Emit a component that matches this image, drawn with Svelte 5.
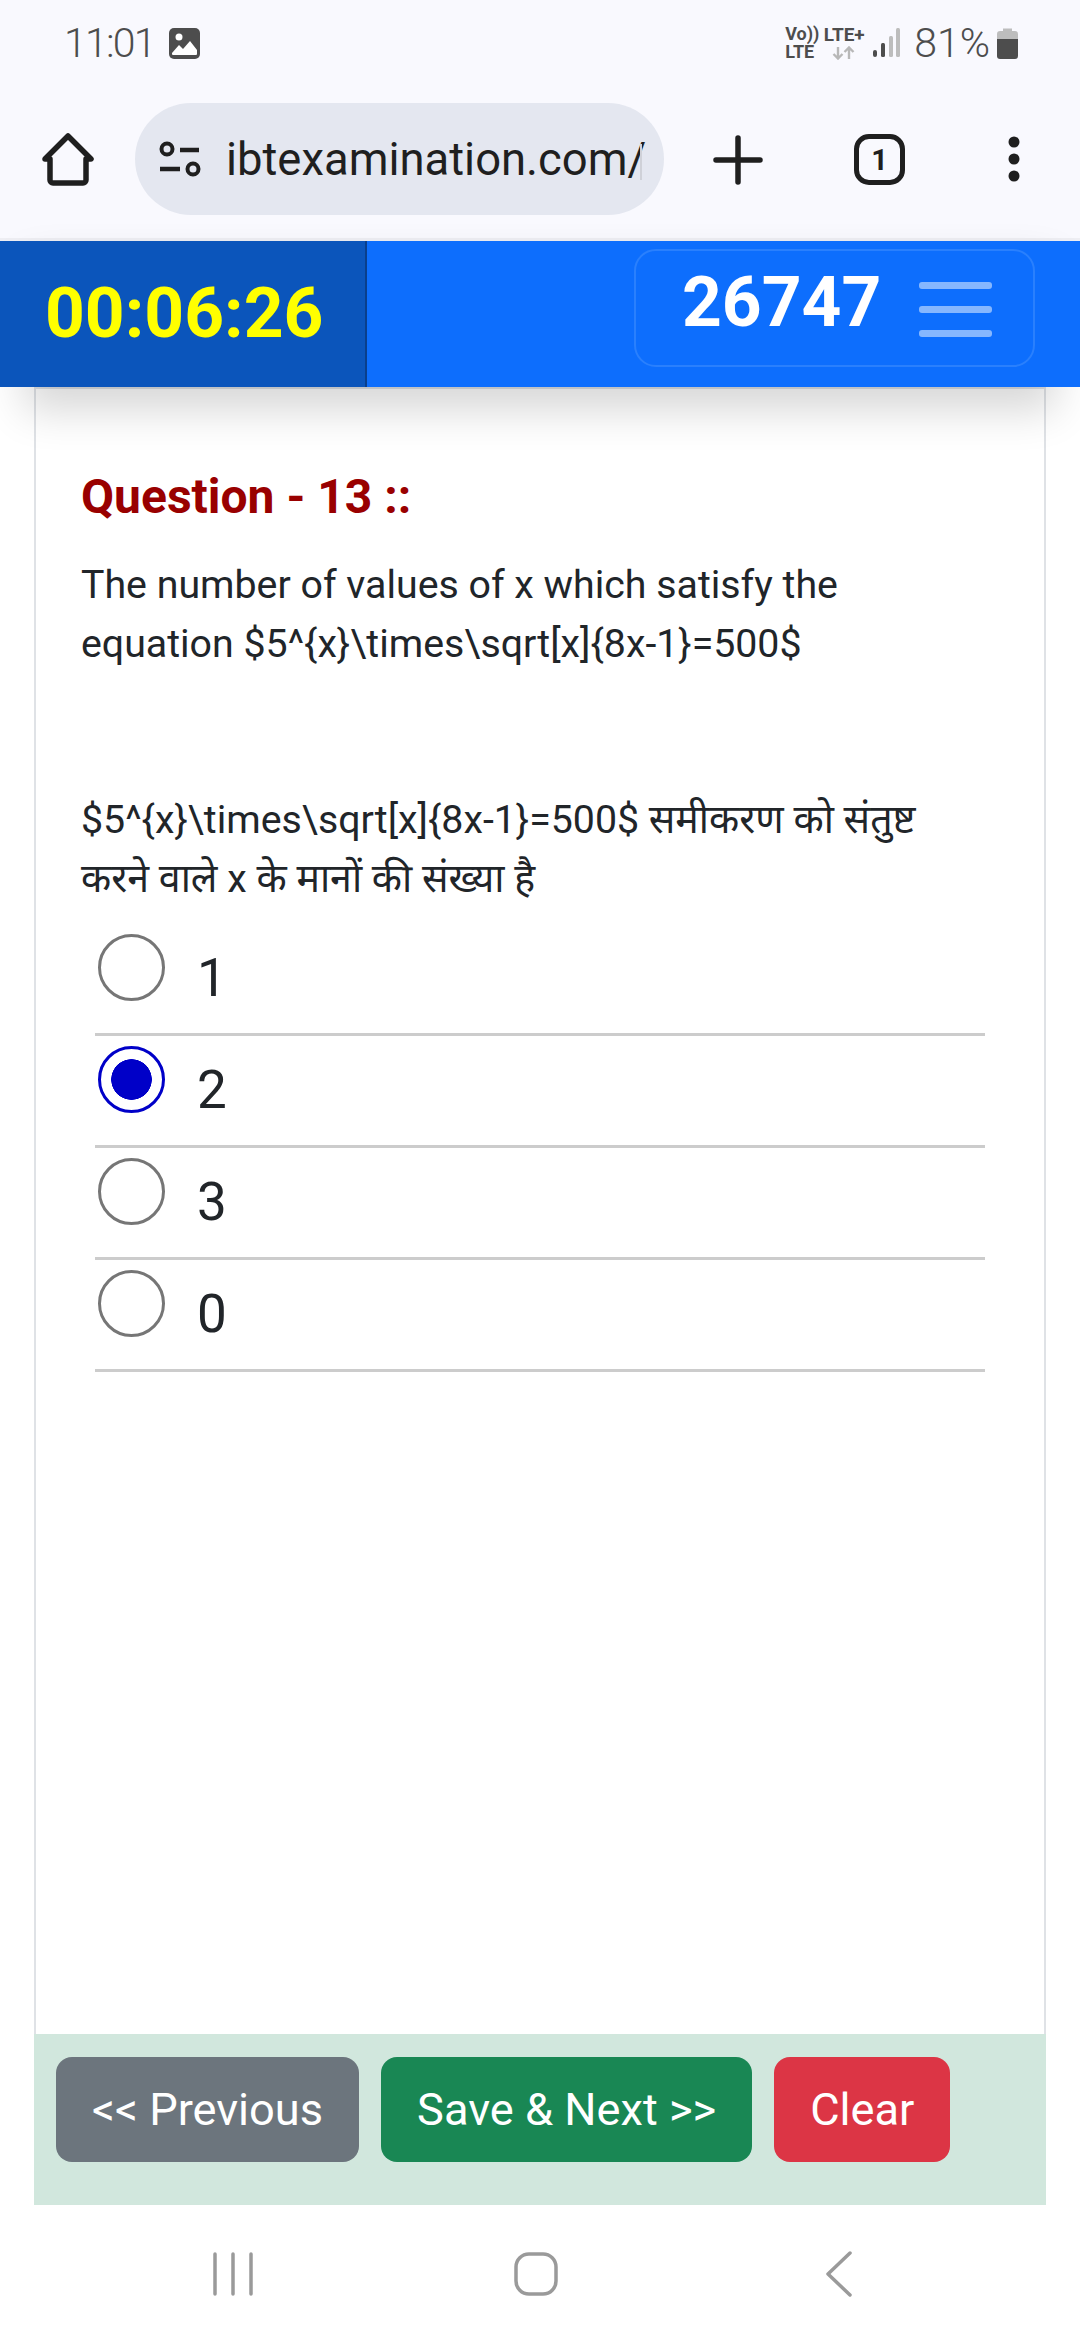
<script>
  const options = [
    { label: '1', selected: false },
    { label: '2', selected: true },
    { label: '3', selected: false },
    { label: '0', selected: false }
  ];
</script>

<div class="screen">
  <header class="status">
    <span class="time">11:01</span>
    <svg class="pic" viewBox="0 0 31 31" aria-hidden="true">
      <rect width="31" height="31" rx="5" fill="#4d4d4d" />
      <circle cx="10" cy="9" r="3.5" fill="#fff" />
      <path d="M3 25 L10 17 L14 21 L21 13 L28 22 V26 a1 1 0 0 1-1 1 H4 a1 1 0 0 1-1-1 Z" fill="#fff" />
    </svg>
    <div class="indicators">
      <div class="volte"><span>Vo))</span><span>LTE</span></div>
      <div class="lte">
        <span>LTE+</span>
        <svg class="arrows" viewBox="0 0 24 14" aria-hidden="true">
          <path d="M6 1 V12 M1.5 8 L6 12.5 L10.5 8 M17 13 V2 M12.5 6 L17 1.5 L21.5 6" fill="none" stroke="#b8b8b8" stroke-width="2.4" />
        </svg>
      </div>
      <svg class="signal" viewBox="0 0 27 30" aria-hidden="true">
        <rect x="0" y="22" width="4" height="7" rx="2" fill="#4d4d4d" />
        <rect x="8" y="15" width="4" height="14" rx="1.5" fill="#4d4d4d" />
        <rect x="16" y="8" width="4" height="21" rx="1.5" fill="#bdbdbd" />
        <rect x="23" y="0" width="4" height="29" rx="1.5" fill="#bdbdbd" />
      </svg>
      <span class="pct">81%</span>
      <svg class="battery" viewBox="0 0 21 31" aria-hidden="true">
        <path d="M6 0.5 H15 V3 H18 a3 3 0 0 1 3 3 V11 H0 V6 a3 3 0 0 1 3-3 H6 Z" fill="#bdbdbd" />
        <path d="M0 11 H21 V28 a3 3 0 0 1-3 3 H3 a3 3 0 0 1-3-3 Z" fill="#4d4d4d" />
      </svg>
    </div>
  </header>

  <div class="toolbar">
    <svg class="home" viewBox="0 0 56 56" aria-hidden="true">
      <path d="M5 28 L28 5 L51 28 H46 V49 a3 3 0 0 1-3 3 H13 a3 3 0 0 1-3-3 V28 Z" fill="none" stroke="#1f1f1f" stroke-width="5.5" stroke-linejoin="round" />
    </svg>
    <div class="pill">
      <svg class="tune" viewBox="0 0 50 40" aria-hidden="true">
        <circle cx="12" cy="10" r="5.5" fill="none" stroke="#1f1f1f" stroke-width="4" />
        <path d="M25 11 H44 M5 30 H25" stroke="#1f1f1f" stroke-width="4.5" />
        <circle cx="38" cy="30" r="5.5" fill="none" stroke="#1f1f1f" stroke-width="4" />
      </svg>
      <span class="url">ibtexamination.com/</span>
      <span class="sliver"></span>
    </div>
    <svg class="plus" viewBox="0 0 50 50" aria-hidden="true">
      <path d="M25 3 V47 M3 25 H47" stroke="#1f1f1f" stroke-width="5.5" stroke-linecap="round" />
    </svg>
    <div class="tabs">1</div>
    <svg class="dots" viewBox="0 0 12 46" aria-hidden="true">
      <circle cx="6" cy="6" r="5.5" fill="#1f1f1f" />
      <circle cx="6" cy="23" r="5.5" fill="#1f1f1f" />
      <circle cx="6" cy="40" r="5.5" fill="#1f1f1f" />
    </svg>
  </div>

  <div class="caster"></div>
  <div class="bar">
    <div class="timer">00:06:26</div>
    <div class="brand">
      <span class="code">26747</span>
      <span class="burger"><i></i><i></i><i></i></span>
    </div>
  </div>

  <main class="main">
    <section class="card">
      <h2>Question - 13 ::</h2>
      <p class="en">The number of values of x which satisfy the equation $5^&#123;x&#125;\times\sqrt[x]&#123;8x-1&#125;=500$</p>
      <p class="hi">$5^&#123;x&#125;\times\sqrt[x]&#123;8x-1&#125;=500$ समीकरण को संतुष्ट करने वाले x के मानों की संख्या है</p>
      <ul class="options">
        {#each options as o}
          <li>
            <span class="radio" class:on={o.selected}></span>
            <span class="opt">{o.label}</span>
          </li>
        {/each}
      </ul>
    </section>
    <footer class="actions">
      <button class="prev">&lt;&lt; Previous</button>
      <button class="next">Save &amp; Next &gt;&gt;</button>
      <button class="clear">Clear</button>
    </footer>
  </main>

  <nav class="nav">
    <svg class="n1" viewBox="0 0 40 44" aria-hidden="true">
      <path d="M2 2 V42 M20 2 V42 M38 2 V42" stroke="#9a9a9a" stroke-width="3.5" stroke-linecap="round" />
    </svg>
    <svg class="n2" viewBox="0 0 44 44" aria-hidden="true">
      <rect x="2" y="2" width="40" height="40" rx="13" fill="none" stroke="#9a9a9a" stroke-width="3.5" />
    </svg>
    <svg class="n3" viewBox="0 0 26 46" aria-hidden="true">
      <path d="M24 2 L2 23 L24 44" fill="none" stroke="#9a9a9a" stroke-width="3.5" stroke-linecap="round" stroke-linejoin="round" />
    </svg>
  </nav>
</div>

<style>
  :global(body) {
    margin: 0;
    background: #fff;
  }
  .screen {
    position: relative;
    width: 1080px;
    height: 2340px;
    display: flex;
    flex-direction: column;
    overflow: hidden;
    font-family: Roboto, "Noto Sans", sans-serif;
    background: #fff;
  }
  .status {
    height: 86px;
    box-sizing: border-box;
    background: #f9f9fe;
    display: flex;
    align-items: center;
    padding: 0 62px 0 64px;
    color: #4d4d4d;
  }
  .time {
    font-size: 41px;
    font-weight: 300;
    line-height: 1;
    letter-spacing: -1.8px;
  }
  .pic {
    width: 31px;
    height: 31px;
    margin-left: 14px;
  }
  .indicators {
    margin-left: auto;
    display: flex;
    align-items: center;
  }
  .volte {
    display: flex;
    flex-direction: column;
    font-size: 18px;
    font-weight: 700;
    line-height: 18px;
    width: 39px;
  }
  .lte {
    display: flex;
    flex-direction: column;
    align-items: center;
    font-size: 19px;
    font-weight: 700;
    line-height: 18px;
    width: 40px;
  }
  .arrows {
    width: 24px;
    height: 14px;
    margin-top: 2px;
  }
  .signal {
    width: 27px;
    height: 30px;
    margin-left: 9px;
  }
  .pct {
    font-size: 41px;
    font-weight: 300;
    line-height: 1;
    margin-left: 14px;
  }
  .battery {
    width: 21px;
    height: 31px;
    margin-left: 7px;
  }
  .toolbar {
    height: 155px;
    box-sizing: border-box;
    background: #f9f9fe;
    border-bottom: 3px solid #eeeef3;
    display: flex;
    align-items: flex-start;
    padding-top: 17px;
  }
  .home {
    width: 56px;
    height: 56px;
    margin: 28px 0 0 40px;
  }
  .pill {
    width: 529px;
    height: 112px;
    margin-left: 39px;
    box-sizing: border-box;
    border-radius: 56px;
    background: #e4e7f0;
    display: flex;
    align-items: center;
    padding: 0 22px 0 20px;
  }
  .tune {
    flex: none;
    width: 50px;
    height: 40px;
  }
  .url {
    margin-left: 21px;
    font-size: 45.4px;
    color: #1f1f1f;
    white-space: nowrap;
    flex: 1;
    min-width: 0;
  }
  .sliver {
    flex: none;
    width: 2px;
    height: 36px;
    margin-top: 6px;
    background: #cfd1d8;
  }
  .plus {
    width: 50px;
    height: 50px;
    margin: 32px 0 0 49px;
  }
  .tabs {
    width: 51px;
    height: 51px;
    box-sizing: border-box;
    margin: 31px 0 0 91px;
    border: 5.5px solid #1f1f1f;
    border-radius: 15px;
    color: #1f1f1f;
    font-size: 29px;
    font-weight: 700;
    display: flex;
    align-items: center;
    justify-content: center;
  }
  .dots {
    width: 12px;
    height: 46px;
    margin: 33px 0 0 103px;
  }
  .caster {
    position: absolute;
    left: 24px;
    right: 24px;
    top: 241px;
    height: 146px;
    box-shadow: 0 23px 40px rgba(0, 0, 0, 0.16);
    z-index: 1;
  }
  .bar {
    position: relative;
    z-index: 2;
    height: 146px;
    background: #0d6efd;
    display: flex;
    align-items: stretch;
  }
  .timer {
    width: 367px;
    box-sizing: border-box;
    background: #0b55bb;
    border-right: 2px solid #0a3f8c;
    color: #ffff00;
    font-size: 69.5px;
    font-weight: 700;
    display: flex;
    align-items: center;
    padding: 0 0 2px 45px;
  }
  .brand {
    width: 401px;
    height: 118px;
    box-sizing: border-box;
    margin: 8px 0 0 267px;
    border: 2px solid #2a80fd;
    border-radius: 22px;
    display: flex;
    align-items: center;
    padding: 0 0 0 46px;
    color: #fff;
  }
  .code {
    font-size: 69.5px;
    font-weight: 700;
    line-height: 1;
    margin-top: -10px;
  }
  .burger {
    display: flex;
    flex-direction: column;
    gap: 17px;
    margin: 2px 0 0 38px;
    width: 73px;
  }
  .burger i {
    display: block;
    height: 7px;
    border-radius: 3px;
    background: #86b7fe;
  }
  .main {
    flex: 1;
    margin: 0 34px;
    display: flex;
    flex-direction: column;
    min-height: 0;
  }
  .card {
    flex: 1;
    box-sizing: border-box;
    background: #fff;
    border: 2px solid #dfe2e6;
    border-width: 2px 2px 0;
    padding: 0 0 0 45px;
  }
  h2 {
    margin: 81px 0 0;
    font-size: 48px;
    line-height: 54px;
    font-weight: 700;
    color: #990000;
  }
  p {
    margin: 0;
    font-size: 39.3px;
    line-height: 59px;
    color: #212529;
    width: 900px;
    font-family: Roboto, "Noto Sans Devanagari", "Noto Sans", sans-serif;
  }
  .en {
    margin-top: 32px;
  }
  .hi {
    margin-top: 117px;
  }
  .options {
    list-style: none;
    margin: 15px 0 0 14px;
    padding: 0;
    width: 890px;
  }
  .options li {
    height: 109px;
    border-bottom: 3px solid #cccccc;
    position: relative;
    display: flex;
    align-items: flex-start;
    padding-top: 0;
  }
  .radio {
    flex: none;
    box-sizing: border-box;
    width: 67px;
    height: 67px;
    margin: 10px 0 0 3px;
    border: 3px solid #767676;
    border-radius: 50%;
    background: #fff;
  }
  .radio.on {
    border-color: #0000c8;
    background: radial-gradient(circle, #0000c8 0 20px, #fff 20.6px);
  }
  .opt {
    font-size: 53px;
    line-height: 56px;
    color: #212529;
    margin: 26px 0 0 32px;
  }
  .actions {
    height: 171px;
    box-sizing: border-box;
    background: #d1e7dd;
    padding: 23px 0 0 22px;
    display: flex;
    align-items: flex-start;
    gap: 22px;
  }
  button {
    height: 105px;
    padding: 0 36px;
    border: 0;
    border-radius: 16px;
    color: #fff;
    font-family: inherit;
    font-size: 45.2px;
  }
  .prev {
    background: #6c757d;
  }
  .next {
    background: #198754;
  }
  .clear {
    background: #dc3545;
  }
  .nav {
    height: 135px;
    box-sizing: border-box;
    display: grid;
    grid-template-columns: repeat(3, 303px);
    justify-content: center;
    align-items: center;
    justify-items: center;
    padding: 2px 8px 0 0;
  }
  .n1 {
    width: 40px;
    height: 44px;
  }
  .n2 {
    width: 44px;
    height: 44px;
  }
  .n3 {
    width: 26px;
    height: 46px;
  }
</style>
